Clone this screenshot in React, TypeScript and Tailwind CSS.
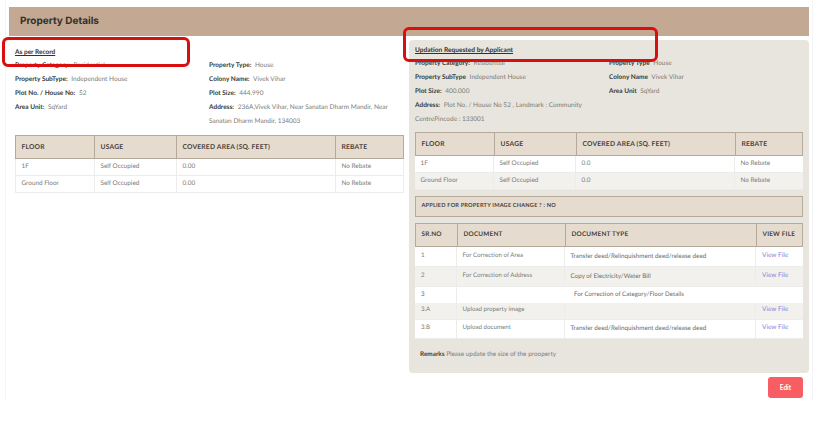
const recordRows = [
  ['1F', 'Self Occupied', '0.00', 'No Rebate'],
  ['Ground Floor', 'Self Occupied', '0.00', 'No Rebate'],
]

const requestedRows = [
  ['1F', 'Self Occupied', '0.0', 'No Rebate'],
  ['Ground Floor', 'Self Occupied', '0.0', 'No Rebate'],
]

const docRows = [
  { sr: '1', doc: 'For Correction of Area', type: 'Transfer deed/Relinquishment deed/release deed', h: 'h-[20px]' },
  { sr: '2', doc: 'For Correction of Address', type: 'Copy of Electricity/Water Bill', h: 'h-[20px]' },
  { sr: '3.A', doc: 'Upload property image', type: '', h: 'h-[17px]' },
  { sr: '3.B', doc: 'Upload document', type: 'Transfer deed/Relinquishment deed/release deed', h: 'h-[19px]' },
]

function Field({ label, value }: { label: string; value: string }) {
  return (
    <div className="h-[14px] whitespace-nowrap text-[6.5px] leading-[14px] text-[#7c7c78]">
      {label && <span className="mr-[2px] font-bold text-[#3b3b38]">{label}</span>} {value}
    </div>
  )
}

function FloorTable({ rows, shaded }: { rows: string[][]; shaded?: boolean }) {
  const widths = ['w-[79px]', 'w-[82px]', 'w-[159px]', 'flex-1']
  const head = ['FLOOR', 'USAGE', 'COVERED AREA (SQ. FEET)', 'REBATE']
  return (
    <div className="text-[6.4px]">
      <div className="flex h-[24px] border border-[#b5a99a] bg-[#e5dccf] text-[6.7px] font-bold tracking-[0.2px] text-[#47423b]">
        {head.map((h, i) => (
          <div key={h} className={`${widths[i]} flex items-center border-r border-[#b5a99a] pl-[5.5px] last:border-r-0`}>
            {h}
          </div>
        ))}
      </div>
      {rows.map((r, ri) => (
        <div
          key={r[0]}
          className={`flex h-[17px] border-b border-[#ececea] text-[#7c7c78] ${
            shaded ? (ri === 0 ? 'bg-white' : 'bg-[#f2f1ed]') : 'border-x bg-white'
          }`}
        >
          {r.map((c, i) => (
            <div key={i} className={`${widths[i]} flex items-center border-r border-[#ececea] pl-[5.5px] last:border-r-0`}>
              {c}
            </div>
          ))}
        </div>
      ))}
    </div>
  )
}

function DocTable() {
  return (
    <div className="text-[6.2px]">
      <div className="flex h-[24px] border border-[#b5a99a] bg-[#e5dccf] text-[6.4px] font-bold tracking-[0.2px] text-[#47423b]">
        <div className="flex w-[42px] items-center border-r border-[#b5a99a] pl-[5.5px]">SR.NO</div>
        <div className="flex w-[108px] items-center border-r border-[#b5a99a] pl-[5.5px]">DOCUMENT</div>
        <div className="flex w-[191px] items-center border-r border-[#b5a99a] pl-[5.5px]">DOCUMENT TYPE</div>
        <div className="flex flex-1 items-center pl-[5.5px]">VIEW FILE</div>
      </div>
      {docRows.slice(0, 2).map((r, i) => (
        <DocRow key={r.sr} {...r} shaded={i === 1} />
      ))}
      <div className="flex h-[16px] items-center bg-white text-[#6c6c68]">
        <div className="flex h-full w-[42px] items-center border-r border-[#ececea] pl-[6px]">3</div>
        <div className="pl-[117px]">For Correction of Category/Floor Details</div>
      </div>
      {docRows.slice(2).map((r, i) => (
        <DocRow key={r.sr} {...r} shaded={i === 0} />
      ))}
    </div>
  )
}

function DocRow({ sr, doc, type, h, shaded }: { sr: string; doc: string; type: string; h: string; shaded: boolean }) {
  return (
    <div className={`flex ${h} border-b border-[#ececea] text-[#7c7c78] ${shaded ? 'bg-[#f2f1ed]' : 'bg-white'}`}>
      <div className="flex w-[42px] items-center border-r border-[#ececea] pb-[2px] pl-[6px]">{sr}</div>
      <div className="flex w-[108px] items-center border-r border-[#ececea] pb-[2px] pl-[5.5px]">{doc}</div>
      <div className="flex w-[191px] items-center border-r border-[#ececea] pl-[5.5px] text-[6.3px] text-[#6c6c68]">{type}</div>
      <div className="flex flex-1 items-center pb-[2px] pl-[6px] text-[6.5px] text-[#8585d8]">View File</div>
    </div>
  )
}

export default function App() {
  return (
    <div className="h-[430px] w-[832px] bg-white font-['Lato','Open_Sans',sans-serif] [text-rendering:geometricPrecision]">
      <div className="relative ml-[5px] h-[400px] w-[808px] border-x border-[#f3f5f8] px-[3px] pt-[7px]">
        <div className="flex h-[29px] items-center bg-[#c3a993] pl-[11px] font-['Inter',sans-serif] text-[10px] font-bold text-[#35302b]">
          Property Details
        </div>

        <div className="mt-[4px] flex gap-[5px]">
          {/* As per record */}
          <div className="w-[395px] shrink-0 pl-[6px]">
            <div className="mt-[6px] h-[14px] text-[6.5px] font-bold leading-[14px] text-[#33312d] underline">
              As per Record
            </div>
            <div className="mt-[-1px] flex">
              <div className="w-[194px] shrink-0">
                <Field label="Property Category:" value="Residential" />
                <Field label="Property SubType:" value="Independent House" />
                <Field label="Plot No. / House No:" value="52" />
                <Field label="Area Unit:" value="SqYard" />
              </div>
              <div className="min-w-0 flex-1">
                <Field label="Property Type:" value="House" />
                <Field label="Colony Name:" value="Vivek Vihar" />
                <Field label="Plot Size:" value="444.990" />
                <Field label="Address:" value="236A,Vivek Vihar, Near Sanatan Dharm Mandir, Near" />
                <Field label="" value="Sanatan Dharm Mandir, 134003" />
              </div>
            </div>
            <div className="mt-[6px]">
              <FloorTable rows={recordRows} />
            </div>
          </div>

          {/* Updation requested */}
          <div className="h-[333px] w-[400px] rounded-[4px] bg-[#e8e5de] px-[6px] pt-[3px]">
            <div className="h-[14px] text-[6.6px] font-bold leading-[14px] text-[#33312d] underline">
              Updation Requested by Applicant
            </div>
            <div className="flex">
              <div className="w-[194px] shrink-0">
                <Field label="Property Category:" value="Residential" />
                <Field label="Property SubType" value="Independent House" />
                <Field label="Plot Size:" value="400.000" />
              </div>
              <div className="min-w-0 flex-1">
                <Field label="Property Type" value="House" />
                <Field label="Colony Name" value="Vivek Vihar" />
                <Field label="Area Unit" value="SqYard" />
              </div>
            </div>
            <Field label="Address:" value="Plot No. / House No 52 , Landmark : Community" />
            <Field label="" value="CentrePincode : 133001" />
            <div className="mt-[5px]">
              <FloorTable rows={requestedRows} shaded />
            </div>
            <div className="mt-[6px] flex h-[21px] items-center border border-[#b5a99a] bg-[#e5dccf] pl-[5.5px] text-[5.6px] font-bold tracking-[0.2px] text-[#47423b]">
              APPLIED FOR PROPERTY IMAGE CHANGE ? : NO
            </div>
            <div className="mt-[6px]">
              <DocTable />
            </div>
            <div className="mt-[11px] pl-[5px] text-[6.4px] text-[#7c7c78]">
              <span className="font-bold text-[#3b3b38]">Remarks</span> Please update the size of the prooperty
            </div>
          </div>
        </div>

        <div className="mt-[4px] flex justify-end pr-[6px]">
          <button className="flex h-[21px] w-[35px] items-center justify-center rounded-[3px] bg-[#f75d63] text-[6.5px] font-bold text-white">
            Edit
          </button>
        </div>

        {/* red annotation boxes */}
        <div className="absolute left-[-4px] top-[37px] h-[30px] w-[188px] rounded-[6px] border-[3px] border-[#d90f0f]" />
        <div className="absolute left-[397px] top-[27px] h-[35px] w-[255px] rounded-[6px] border-[3px] border-[#d90f0f]" />
      </div>
    </div>
  )
}
